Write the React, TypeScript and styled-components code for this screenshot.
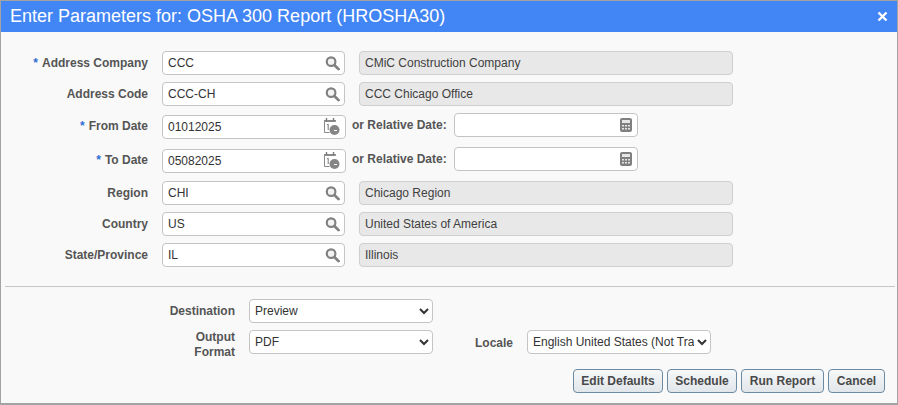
import styled, { createGlobalStyle } from 'styled-components';

const GlobalStyle = createGlobalStyle`
    html, body {
        margin: 0;
        padding: 0;
        background: #f9f9f9;
    }
    * {
        box-sizing: border-box;
    }
`;

const Dialog = styled.div`
    display: flex;
    flex-direction: column;
    width: 898px;
    height: 405px;
    overflow: hidden;
    border: 1px solid #a3a3a3;
    border-bottom-width: 2px;
    background: #f9f9f9;
    font-family: 'Liberation Sans', Arial, sans-serif;
    font-size: 12px;
    color: #404040;
`;

const TitleBar = styled.div`
    display: flex;
    flex: none;
    align-items: center;
    justify-content: space-between;
    height: 31px;
    padding: 0 9px;
    background: #4285f4;
    color: #fff;
`;

const Title = styled.div`
    font-size: 18px;
    line-height: 31px;
`;

const CloseButton = styled.button`
    display: flex;
    padding: 0;
    border: 0;
    background: none;
    color: #fff;
`;

const Form = styled.div`
    display: flex;
    flex-direction: column;
    padding-top: 19px;
`;

const Row = styled.div<{ $height: number; $after?: number }>`
    display: flex;
    align-items: flex-start;
    height: ${({ $height }) => $height}px;
    margin-bottom: ${({ $after }) => $after ?? 0}px;
`;

const Label = styled.label<{ $width?: number; $top?: number }>`
    flex: none;
    width: ${({ $width }) => $width ?? 147}px;
    padding-top: ${({ $top }) => $top ?? 4}px;
    text-align: right;
    font-weight: 700;
    line-height: 15px;
    color: #555;
`;

const Required = styled.span`
    margin-right: 4px;
    color: #2f6fd6;
`;

const Field = styled.div<{ $left?: number; $top?: number; $width?: number }>`
    display: flex;
    flex: none;
    align-items: center;
    width: ${({ $width }) => $width ?? 183}px;
    height: 24px;
    margin-left: ${({ $left }) => $left ?? 14}px;
    margin-top: ${({ $top }) => $top ?? 0}px;
    padding: 0 4px 0 5px;
    border: 1px solid #c4c4c4;
    border-radius: 4px;
    background: #fff;
`;

const FieldInput = styled.input`
    flex: 1;
    min-width: 0;
    padding: 0;
    border: 0;
    outline: 0;
    background: none;
    font-family: inherit;
    font-size: 12px;
    color: #333;
`;

const Description = styled.div`
    flex: none;
    width: 374px;
    height: 24px;
    margin-left: 14px;
    padding-left: 5px;
    border: 1px solid #cfcfcf;
    border-radius: 4px;
    background: #e8e8e8;
    line-height: 22px;
    color: #404040;
`;

const OrLabel = styled.span`
    flex: none;
    margin-left: 6px;
    padding-top: 5px;
    font-weight: 700;
    line-height: 15px;
    color: #555;
`;

const Divider = styled.hr`
    flex: none;
    width: 890px;
    height: 1px;
    margin: 0 0 12px 4px;
    border: 0;
    background: #c6c6c6;
`;

const Select = styled.select<{ $left?: number }>`
    flex: none;
    width: 184px;
    height: 24px;
    margin-left: ${({ $left }) => $left ?? 14}px;
    padding: 0 0 0 1px;
    border: 1px solid #c4c4c4;
    border-radius: 4px;
    background: #fff;
    font-family: inherit;
    font-size: 12px;
    color: #333;
`;

const PlainLabel = styled.span<{ $left: number }>`
    flex: none;
    margin-left: ${({ $left }) => $left}px;
    padding-top: 6px;
    font-weight: 700;
    line-height: 15px;
    color: #555;
`;

const Actions = styled.div`
    display: flex;
    justify-content: flex-end;
    gap: 4px;
    padding: 15px 12px 0 0;
`;

const ActionButton = styled.button<{ $width: number }>`
    width: ${({ $width }) => $width}px;
    height: 24px;
    padding: 0;
    border: 1px solid #6b8ba5;
    border-radius: 4px;
    background: linear-gradient(#f6f8f9, #e1e6ea);
    font-family: inherit;
    font-size: 12px;
    font-weight: 700;
    color: #484848;
`;

function SearchIcon() {
    return (
        <svg width="15" height="15" viewBox="0 0 16 16" fill="none">
            <circle cx="6.5" cy="6" r="4.6" fill="#f2f2f2" stroke="#808080" strokeWidth="2.3" />
            <path d="M10 9.6l4.4 4.4" stroke="#808080" strokeWidth="3" strokeLinecap="round" />
        </svg>
    );
}

function CalendarIcon() {
    return (
        <svg width="18" height="20" viewBox="0 0 18 20" fill="none">
            <path d="M1.5 4.5h11M1.5 4.5v11h5" stroke="#8a8a8a" strokeWidth="1" />
            <path d="M1 3h12v1.6H1z" fill="#8a8a8a" />
            <path d="M3.5 1v3M10.5 1v3" stroke="#7c7c7c" strokeWidth="1.4" />
            <path d="M4 8l1.2-.8V13" stroke="#777" strokeWidth="1" />
            <circle cx="11.5" cy="13" r="5" fill="#858585" />
            <path d="M11 13.5h3" stroke="#fff" strokeWidth="1" />
        </svg>
    );
}

function CalculatorIcon() {
    return (
        <svg width="14" height="16" viewBox="0 0 14 16">
            <rect x="1" y="1" width="12" height="14" rx="2" fill="#808080" />
            <rect x="3" y="3" width="8" height="3" fill="#e6e6e6" />
            <path d="M3 8h2v1.5H3zM6 8h2v1.5H6zM9 8h2v1.5H9zM3 11h2v1.5H3zM6 11h2v1.5H6zM9 11h2v1.5H9z" fill="#e6e6e6" />
        </svg>
    );
}

interface LookupRowProps {
    after?: number;
    code: string;
    description: string;
    label: string;
    required?: boolean;
}

function LookupRow({ after, code, description, label, required }: LookupRowProps) {
    return (
        <Row $after={after} $height={24}>
            <Label $top={5}>
                {required && <Required>*</Required>}
                {label}
            </Label>
            <Field>
                <FieldInput defaultValue={code} />
                <SearchIcon />
            </Field>
            <Description>{description}</Description>
        </Row>
    );
}

function DateRow({ after, label, value }: { after: number; label: string; value: string }) {
    return (
        <Row $after={after} $height={26}>
            <Label $top={6}>
                <Required>*</Required>
                {label}
            </Label>
            <Field $top={2} $width={184}>
                <FieldInput defaultValue={value} />
                <CalendarIcon />
            </Field>
            <OrLabel>or Relative Date:</OrLabel>
            <Field $left={7} $width={184}>
                <FieldInput />
                <CalculatorIcon />
            </Field>
        </Row>
    );
}

export default function App() {
    return (
        <>
            <GlobalStyle />
            <Dialog>
                <TitleBar>
                    <Title>Enter Parameters for: OSHA 300 Report (HROSHA30)</Title>
                    <CloseButton aria-label="Close">
                        <svg width="11" height="11" viewBox="0 0 11 11" fill="none">
                            <path d="M1.5 1.5l8 8M9.5 1.5l-8 8" stroke="#fff" strokeWidth="2.4" />
                        </svg>
                    </CloseButton>
                </TitleBar>
                <Form>
                    <LookupRow after={7} code="CCC" description="CMiC Construction Company" label="Address Company" required />
                    <LookupRow after={7} code="CCC-CH" description="CCC Chicago Office" label="Address Code" />
                    <DateRow after={8} label="From Date" value="01012025" />
                    <DateRow after={8} label="To Date" value="05082025" />
                    <LookupRow after={7} code="CHI" description="Chicago Region" label="Region" />
                    <LookupRow after={7} code="US" description="United States of America" label="Country" />
                    <LookupRow after={19} code="IL" description="Illinois" label="State/Province" />
                    <Divider />
                    <Row $after={7} $height={24}>
                        <Label $top={5} $width={234}>Destination</Label>
                        <Select defaultValue="Preview">
                            <option>Preview</option>
                        </Select>
                    </Row>
                    <Row $height={24}>
                        <Label $top={0} $width={234}>Output<br />Format</Label>
                        <Select defaultValue="PDF">
                            <option>PDF</option>
                        </Select>
                        <PlainLabel $left={42}>Locale</PlainLabel>
                        <Select $left={14} defaultValue="en">
                            <option value="en">English United States (Not Translated)</option>
                        </Select>
                    </Row>
                    <Actions>
                        <ActionButton $width={90}>Edit Defaults</ActionButton>
                        <ActionButton $width={70}>Schedule</ActionButton>
                        <ActionButton $width={83}>Run Report</ActionButton>
                        <ActionButton $width={57}>Cancel</ActionButton>
                    </Actions>
                </Form>
            </Dialog>
        </>
    );
}
